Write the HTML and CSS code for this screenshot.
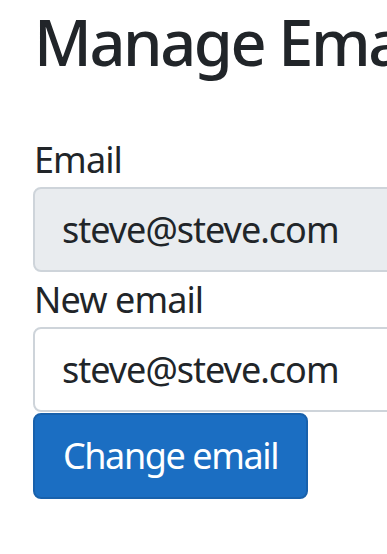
FILE: index.html
```
<!DOCTYPE html>
<html lang="en">
<head>
<meta charset="utf-8">
<title>Manage Email</title>
<link rel="stylesheet" href="styles.css">
</head>
<body>
<main class="page">
  <h3 class="title">Manage Email</h3>
  <form class="form">
    <div class="field">
      <label class="label" for="email">Email</label>
      <input class="control control-disabled" id="email" type="text" value="steve@steve.com" disabled>
    </div>
    <div class="field">
      <label class="label" for="newemail">New email</label>
      <input class="control" id="newemail" type="text" value="steve@steve.com">
    </div>
    <button class="btn" type="button">Change email</button>
  </form>
</main>
</body>
</html>
```
FILE: styles.css
```
html, body {
  margin: 0;
  padding: 0;
  background: #fff;
}
body {
  width: 387px;
  height: 554px;
  overflow: hidden;
  font-family: "Noto Sans", "Open Sans", sans-serif;
  color: #212529;
}
.page {
  padding: 4px 0 0 33px;
}
.title {
  margin: 0 0 53px 1px;
  font-size: 63px;
  font-weight: 500;
  line-height: 1.2;
  letter-spacing: -2.4px;
  color: #212529;
  white-space: nowrap;
}
.form {
  width: 700px;
  display: flex;
  flex-direction: column;
  align-items: flex-start;
}
.field {
  width: 100%;
  display: flex;
  flex-direction: column;
  margin-bottom: 1px;
}
.label {
  padding-left: 1px;
  font-size: 36px;
  line-height: 54px;
  letter-spacing: -0.9px;
}
.control {
  box-sizing: border-box;
  width: 100%;
  height: 85px;
  padding: 0 27px 0 27px;
  font-family: inherit;
  font-size: 36px;
  letter-spacing: -1px;
  color: #212529;
  background: #fff;
  border: 2px solid #ced4da;
  border-radius: 8px;
  outline: none;
}
.control-disabled {
  background: #e9ecef;
  opacity: 1;
  -webkit-text-fill-color: #212529;
}
.btn {
  box-sizing: border-box;
  width: 275px;
  height: 86px;
  padding: 0;
  font-family: inherit;
  font-size: 36px;
  letter-spacing: -1.4px;
  color: #fff;
  background: #1b6ec2;
  border: 2px solid #1861ac;
  border-radius: 8px;
}
```
